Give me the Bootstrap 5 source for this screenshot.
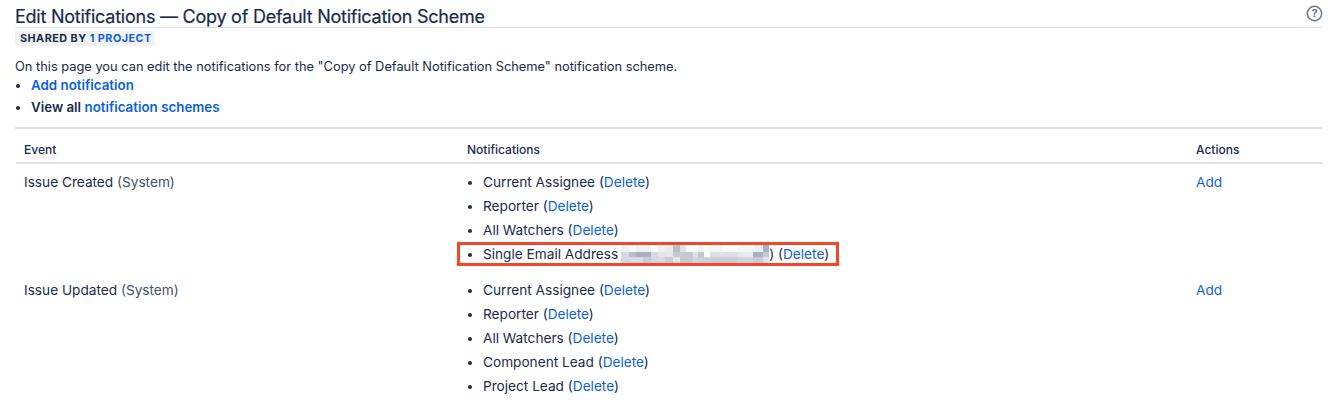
<!DOCTYPE html>
<html lang="en">
<head>
<meta charset="utf-8">
<title>Edit Notifications</title>
<link href="https://cdn.jsdelivr.net/npm/bootstrap@5.3.0/dist/css/bootstrap.min.css" rel="stylesheet">
<style>
html,body{background:#fff;height:400px;overflow:hidden}
body{font-family:Inter,"Liberation Sans",sans-serif;font-size:12.83px;line-height:24px;color:#172b4d;padding:0 6px 0 15px}
a{color:#0c5fe0;text-decoration:none}
.head-row{height:28px;border-bottom:1px solid #dfe1e6;position:relative;padding-top:6px}
.page-title{font-size:18px;line-height:22px;font-weight:400;margin:0;letter-spacing:-.0135em;-webkit-text-stroke:.2px #172b4d}
.help-ico{position:absolute;right:-1px;top:5px;width:17px;height:17px}
.shared-tag{background:#f1f2f5;border-radius:3px;font-size:10.8px;font-weight:700;line-height:15px;height:15px;padding:0 5px;letter-spacing:.045em;margin-top:3px;display:block;width:140px;white-space:nowrap}
.intro{line-height:18px;margin-top:12px}
.bul-list{margin:-2px 0 0;padding-left:16px;font-size:13.35px;font-weight:600;border-bottom:2px solid #dfe1e6;padding-bottom:9px}
.bul-list li{line-height:22px}
.bul-list li::marker{font-size:13px}
.ev-table{width:1307px;margin-left:1px;table-layout:fixed;border-collapse:separate;border-spacing:0;font-size:13.65px}
.ev-table th{font-weight:500;font-size:12px;line-height:18px;padding:12px 8px 3px;border-bottom:2px solid #dfe1e6}
.ev-table td{padding:6px 8px 0;vertical-align:top}
.sys{color:#42526e}
.note-list{list-style:disc;margin:0 0 6px;padding-left:16px}
.note-list li{line-height:24px}
.note-list li::marker{font-size:13px}
.hl-box{position:relative;z-index:1}
.hl-frame{position:absolute;left:-26px;top:0;width:382px;height:24px;border:3px solid #f2452a;pointer-events:none}
.blur-mask{display:inline-block;width:148px;height:22px;vertical-align:-7px;margin-left:3px}
</style>
</head>
<body>
<div class="head-row">
  <h1 class="page-title">Edit Notifications — Copy of Default Notification Scheme</h1>
  <svg class="help-ico" viewBox="0 0 17 17" fill="none"><circle cx="8.5" cy="8.5" r="7.2" stroke="#6b778c" stroke-width="1.5"/><text x="8.5" y="12.2" text-anchor="middle" font-size="11" font-weight="700" font-family="Inter" fill="#6b778c">?</text></svg>
</div>
<span class="shared-tag">SHARED BY <a href="#">1 PROJECT</a></span>
<p class="intro mb-0">On this page you can edit the notifications for the "Copy of Default Notification Scheme" notification scheme.</p>
<ul class="bul-list">
  <li><a href="#">Add notification</a></li>
  <li>View all <a href="#">notification schemes</a></li>
</ul>
<table class="ev-table">
  <colgroup><col style="width:443px"><col style="width:729px"><col></colgroup>
  <thead><tr><th>Event</th><th>Notifications</th><th>Actions</th></tr></thead>
  <tbody>
    <tr>
      <td>Issue Created <span class="sys">(System)</span></td>
      <td><ul class="note-list">
        <li>Current Assignee (<a href="#">Delete</a>)</li>
        <li>Reporter (<a href="#">Delete</a>)</li>
        <li>All Watchers (<a href="#">Delete</a>)</li>
        <li class="hl-box"><span class="hl-frame"></span>Single Email Address<svg class="blur-mask" viewBox="0 0 148 22" shape-rendering="crispEdges"><rect width="148" height="22" fill="#e4e6ec"/>
<rect x="0" width="8" height="8" fill="#f0f1f4"/><rect x="8" width="7" height="8" fill="#fafafa"/><rect x="15" width="15" height="8" fill="#f0f1f4"/><rect x="30" width="7" height="8" fill="#fff"/><rect x="37" width="7" height="8" fill="#eeeff2"/><rect x="44" width="8" height="8" fill="#e8eaee"/><rect x="52" width="7" height="8" fill="#b8bdc9"/><rect x="59" width="6" height="8" fill="#dfe2e8"/><rect x="65" width="12" height="8" fill="#fff"/><rect x="77" width="12" height="8" fill="#f0f1f4"/><rect x="89" width="13" height="8" fill="#f4f5f7"/><rect x="102" width="15" height="8" fill="#fff"/><rect x="117" width="15" height="8" fill="#f6f7f8"/><rect x="132" width="10" height="8" fill="#eeeff2"/><rect x="142" width="6" height="8" fill="#a8b0bf"/>
<rect x="0" y="8" width="8" height="5" fill="#d5d8e0"/><rect x="8" y="8" width="7" height="5" fill="#b8bdc9"/><rect x="15" y="8" width="15" height="5" fill="#a9b0be"/><rect x="30" y="8" width="7" height="5" fill="#d6d9e1"/><rect x="37" y="8" width="7" height="5" fill="#e3e5ea"/><rect x="44" y="8" width="8" height="5" fill="#e6e8ec"/><rect x="52" y="8" width="20" height="5" fill="#c5c9d3"/><rect x="72" y="8" width="5" height="5" fill="#dfe2e8"/><rect x="77" y="8" width="6" height="5" fill="#c0c5cf"/><rect x="83" y="8" width="6" height="5" fill="#fff"/><rect x="83" width="6" height="8" fill="#fff"/><rect x="89" y="8" width="28" height="5" fill="#dde0e6"/><rect x="117" y="8" width="15" height="5" fill="#e8eaee"/><rect x="132" y="8" width="10" height="5" fill="#a8b0bf"/><rect x="142" y="8" width="6" height="5" fill="#c5c9d3"/>
<rect x="0" y="13" width="8" height="9" fill="#d5d8e0"/><rect x="8" y="13" width="14" height="9" fill="#d8dbe2"/><rect x="22" y="13" width="8" height="9" fill="#c7cbd5"/><rect x="30" y="13" width="14" height="9" fill="#d6d9e1"/><rect x="44" y="13" width="8" height="9" fill="#c8ccd6"/><rect x="52" y="13" width="7" height="9" fill="#e6e8ec"/><rect x="59" y="13" width="13" height="9" fill="#c5c9d3"/><rect x="72" y="13" width="5" height="9" fill="#d5d8e0"/><rect x="77" y="13" width="12" height="9" fill="#cdd1da"/><rect x="89" y="13" width="28" height="9" fill="#c8ccd6"/><rect x="117" y="13" width="15" height="9" fill="#d0d4dc"/><rect x="132" y="13" width="10" height="9" fill="#c8ccd6"/><rect x="142" y="13" width="6" height="9" fill="#dfe2e8"/></svg>) (<a href="#">Delete</a>)</li>
      </ul></td>
      <td><a href="#">Add</a></td>
    </tr>
    <tr>
      <td>Issue Updated <span class="sys">(System)</span></td>
      <td><ul class="note-list">
        <li>Current Assignee (<a href="#">Delete</a>)</li>
        <li>Reporter (<a href="#">Delete</a>)</li>
        <li>All Watchers (<a href="#">Delete</a>)</li>
        <li>Component Lead (<a href="#">Delete</a>)</li>
        <li>Project Lead (<a href="#">Delete</a>)</li>
      </ul></td>
      <td><a href="#">Add</a></td>
    </tr>
  </tbody>
</table>
<script src="https://cdn.jsdelivr.net/npm/bootstrap@5.3.0/dist/js/bootstrap.bundle.min.js"></script>
</body>
</html>
